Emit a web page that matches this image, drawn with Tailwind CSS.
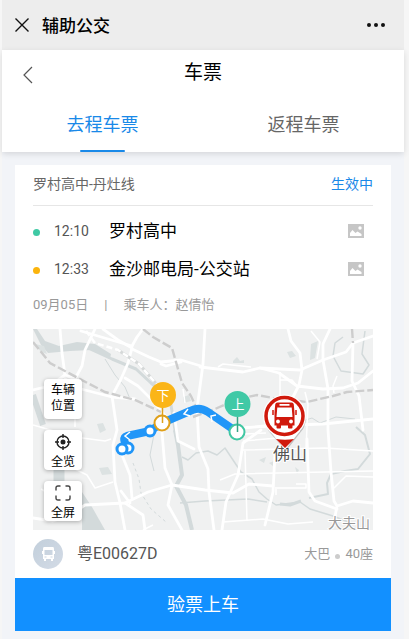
<!DOCTYPE html>
<html lang="zh-CN">
<head>
  <meta charset="UTF-8">
  <meta name="viewport" content="width=device-width, initial-scale=1">
  <title>车票</title>
  <script src="https://cdn.jsdelivr.net/npm/@tailwindcss/browser@4"></script>
</head>
<body class="bg-[#f6f6f6] font-[Roboto,'Noto_Sans_CJK_SC',sans-serif]">

  <div class="ml-0.5 mr-[5px] min-h-screen bg-[#f2f4f8]">

    <!-- app bar -->
    <header class="flex h-[50px] items-center bg-[#ededed] px-3">
      <button type="button" aria-label="关闭" class="h-4 w-4">
        <svg viewBox="0 0 16 16" class="h-4 w-4" fill="none" stroke="#111" stroke-width="1.4"><path d="M1.5 1.5l13 13M14.5 1.5l-13 13"/></svg>
      </button>
      <span class="ml-3 pt-0.5 text-[17px] leading-6 font-medium text-black">辅助公交</span>
      <button type="button" aria-label="更多" class="ml-auto mr-1.5">
        <svg viewBox="0 0 20 6" class="h-1.5 w-5" fill="#111"><circle cx="3" cy="3" r="2"/><circle cx="10" cy="3" r="2"/><circle cx="17" cy="3" r="2"/></svg>
      </button>
    </header>

    <div class="bg-white shadow-[0_2px_6px_rgba(0,0,0,0.12)]">
      <div class="grid h-12 grid-cols-[40px_1fr_40px] items-center">
        <button type="button" aria-label="返回" class="ml-5 pt-0.5">
          <svg viewBox="0 0 12 18" class="h-[18px] w-3" fill="none" stroke="#555" stroke-width="1.2"><path d="M10 1L2 9l8 8"/></svg>
        </button>
        <h1 class="pb-0.5 text-center text-[19px] leading-6 text-black">车票</h1>
      </div>
      <nav class="grid h-[54px] grid-cols-2 text-center text-[18px] leading-6">
        <a href="#go" class="flex flex-col items-center justify-between pt-[15px] text-[#1989e8]">
          去程车票
          <span class="h-0.5 w-[45px] rounded-full bg-[#1989e8]"></span>
        </a>
        <a href="#back" class="pt-[15px] text-[#666]">返程车票</a>
      </nav>
    </div>

    <main class="mx-[13px] mt-[13px] bg-white">
      <div class="px-[18px]">
        <div class="flex h-[41px] items-center justify-between border-b border-[#e6e6e6] pb-0.5 text-[14px] leading-5">
          <h2 class="text-[#666]">罗村高中-丹灶线</h2>
          <span class="text-[#1989e8]">生效中</span>
        </div>

        <ul class="pt-1.5">
          <li class="flex h-[38px] items-center">
            <span class="mt-0.5 h-[7px] w-[7px] rounded-full bg-[#3fc9a4]"></span>
            <span class="ml-3.5 w-[55px] text-[14px] text-[#555]">12:10</span>
            <span class="text-[17px] leading-6 text-black">罗村高中</span>
            <button type="button" aria-label="查看图片" class="ml-auto mr-[9px]">
              <svg viewBox="0 0 16 14" class="h-3.5 w-4"><path fill="#c6c6c6" d="M0 0h16v14H0z"/><path fill="#fff" d="M2 12V9l2.500-3 3 3 2-1.500 4 2.500v2z"/><circle cx="12" cy="4" r="1.700" fill="#fff"/></svg>
            </button>
          </li>
          <li class="flex h-[38px] items-center">
            <span class="mt-0.5 h-[7px] w-[7px] rounded-full bg-[#fbb40c]"></span>
            <span class="ml-3.5 w-[55px] text-[14px] text-[#555]">12:33</span>
            <span class="text-[17px] leading-6 text-black">金沙邮电局-公交站</span>
            <button type="button" aria-label="查看图片" class="ml-auto mr-[9px]">
              <svg viewBox="0 0 16 14" class="h-3.5 w-4"><path fill="#c6c6c6" d="M0 0h16v14H0z"/><path fill="#fff" d="M2 12V9l2.500-3 3 3 2-1.500 4 2.500v2z"/><circle cx="12" cy="4" r="1.700" fill="#fff"/></svg>
            </button>
          </li>
        </ul>

        <p class="flex h-[41px] pt-[7px] text-[13px] leading-5 text-[#999]">
          <span>09月05日</span><span class="mx-4">|</span><span>乘车人：赵倩怡</span>
        </p>

        <!-- map -->
        <div class="relative">
          <svg viewBox="0 0 340 201" class="block w-full bg-[#f0f1f1]" role="img" aria-label="线路地图">
            <!-- water -->
            <g fill="none" stroke="#d3dadb" stroke-linejoin="round">
              <path fill="#d3dadb" stroke="none" d="M0 0h4l8 12 14 5 18-4 18 2 16 10-1 5-18-9-22 1-22 2L8 16z"/>
              <path stroke-width="3" d="M55 19L79 30L103 40L118 54L137 70L142 101L145 116"/>
              <path stroke-width="4" d="M142 101L145 116L149 146L143 157L153 176L159 201"/>
              <path stroke-width="1.500" d="M149 128L155 131L163 124L175 122L184 126L192 119L208 143L219 150L226 163L234 170L243 176L267 173L277 180L300 187L318 194"/>
              <path stroke-width="1.500" d="M147 174L172 172L215 170L234 173"/>
              <path stroke-width="3" d="M247 175L257 176L268 172"/>
              <path stroke-width="1.500" d="M332 2L329 25L336 36L330 45L308 42L300 27L302 14L310 8"/>
              <path stroke-width="2" d="M323 98L332 106L337 125L325 140L312 142L298 145L294 154L295 165L276 169"/>
              <path stroke-width="1" d="M72 30L82 46L92 58L97 70M122 100L117 126L121 142M263 94L279 89L287 94L303 88L322 90"/>
              <path stroke-width="1" stroke-dasharray="3 3" d="M100 134L106 150L108 164L118 180L133 193M240 94L263 96"/>
              <path stroke-width="6" d="M0 66L6 84L10 96"/>
              <path stroke-width="11" d="M26 138v14"/>
            </g>
            <g fill="#dce2e2">
              <path fill="#d3dadb" d="M49 163l10 15 13 23H49z"/>
              <path d="M64 95l6-1 3 7-6 3zM66 139l9-1 4 7-10 1zM278 15l7-3-3 17-5 2zM200 32l4-4 3 4 4-1v3h-11zM226 131l7-3-2 6zM236 134l5-2-1 5zM262 138l4 3-2 4zM150 68l6-2 2 6-7 2zM254 23l5-1 4 5-6 2zM2 15l9 2 3 8-6-2z"/>
            </g>
            <!-- minor roads -->
            <g fill="none" stroke="#fff" stroke-width="1.500" stroke-linejoin="round">
              <path d="M42 50L42 98M0 96L42 108L72 112L78 110M42 140L54 146L62 159L80 153M8 160L40 178"/>
              <path d="M212 122L214 192M187 151L202 145L340 142M210 112L245 109M208 121L292 119L340 122M244 159L273 159L273 155L263 155M243 158L243 166"/>
              <path d="M247 43L247 68M247 51L259 51L264 57M272 63L275 75L273 120M304 47L300 57L301 64M278 2L287 13L284 30M213 98L233 98M210 105L233 104"/>
              <path d="M185 38L190 35L218 38M150 60L152 74M300 160L313 147L340 148"/>
              <path d="M110 201L120 196M190 193L230 190L255 195L280 193"/>
            </g>
            <!-- major roads -->
            <g fill="none" stroke="#fff" stroke-width="2.800" stroke-linejoin="round" stroke-linecap="round">
              <path d="M27 0L29 24L32 46L17 57L0 61M32 50L48 60L79 68L102 70"/>
              <path d="M62 0L52 21L49 37L42 50L32 46M48 2L75 10L99 17"/>
              <path d="M70 0L85 11L99 19L95 34L88 50L79 67L84 101L80 116L82 153L87 174L92 201"/>
              <path d="M99 17L104 8L110 0M99 20L116 28L128 33L148 31L168 37"/>
              <path d="M128 35L133 37L148 33M92 49L105 57L119 71L135 90L129 103L132 139L139 156L135 176L149 201"/>
              <path d="M0 189L20 192L36 187L52 176L92 174L115 163L139 156L172 161L200 164L216 155L240 157"/>
              <path d="M89 126L97 146L99 169M88 162L97 174M92 174L110 186L112 201"/>
              <path d="M172 0L170 35L164 80L166 118L175 140L176 163L181 201M141 84L145 112L161 120"/>
              <path d="M167 38L210 43L227 39L267 41L290 31L313 23L320 14L340 7"/>
              <path d="M227 39L246 44L264 57L290 60L310 59L325 54L340 42M255 0L258 12L267 24L269 41L266 56L260 68"/>
              <path d="M297 0L290 15L290 31L295 60L295 101L298 143L301 172L304 177L300 198M304 177L320 172L340 174"/>
              <path d="M320 14L319 52L326 67L330 101M210 99L232 97L290 95L340 90"/>
              <path d="M228 101L210 114L205 146L193 173L189 201M242 124L240 163L232 196M274 110L276 163L282 172L304 180"/>
            </g>
            <!-- rail -->
            <g fill="none" stroke="#cdcdcd" stroke-width="2.400" stroke-dasharray="9 3">
              <path d="M0 13L17 34L45 49L72 63L102 71L128 83M110 0L120 8L139 19L149 54L158 67L164 80"/>
              <path d="M160 88L182 80L205 70L224 66L240 69L274 73L300 67L314 63L340 61M319 0L320 14"/>
            </g>
            <path fill="none" stroke="#d6d9d9" stroke-width="3" d="M85 21L106 35L126 58"/>
            <path fill="none" stroke="#fff" stroke-width="2.500" stroke-dasharray="6 3" d="M53 2L62 14L85 21L106 35L126 58"/>
            <text x="240" y="131" font-size="17" fill="#555" stroke="#fff" stroke-width="2" paint-order="stroke">佛山</text>
            <text x="295" y="199" font-size="14" fill="#999" stroke="#fff" stroke-width="2" paint-order="stroke">大夫山</text>
            <!-- route -->
            <path fill="none" stroke="#2196f8" stroke-width="8" stroke-linejoin="round" d="M204 103L175 83Q166 77 157 82L129 94L117 102L94 107Q88 109 95 119"/>
            <g fill="none" stroke="#fff" stroke-width="1.500"><path d="M155 80l-4 5 6 2M183 86l-5 1 1 6M97 103l-5 4 5 4"/></g>
            <g fill="#fff" stroke="#2196f8" stroke-width="3"><circle cx="117" cy="102" r="5"/><circle cx="95" cy="119" r="5"/><circle cx="89" cy="120" r="5"/></g>
            <circle cx="129" cy="94" r="7.500" fill="#fff" stroke="#dfa01a" stroke-width="2"/>
            <path stroke="#dfa01a" stroke-width="1.500" d="M129.500 78v16"/>
            <circle cx="130" cy="66" r="13" fill="#fbb518"/>
            <text x="130" y="71" font-size="13" fill="#fff" text-anchor="middle">下</text>
            <circle cx="204" cy="103" r="7.500" fill="#fff" stroke="#40c7a3" stroke-width="2"/>
            <path stroke="#35a585" stroke-width="1.500" d="M204.500 88v15"/>
            <circle cx="204.500" cy="75" r="13" fill="#40c9a6"/>
            <text x="205" y="80" font-size="13" fill="#fff" text-anchor="middle">上</text>
            <!-- bus marker -->
            <path fill="#000" opacity=".2" d="M233 88a20 20 0 1 1 34 16l-14 18-14-16a20 20 0 0 1-6-18z"/>
            <path fill="#fff" d="M237 102h30l-15 19z"/>
            <circle cx="251.500" cy="87" r="21.500" fill="#fff"/>
            <circle cx="251.500" cy="87" r="18.500" fill="#fff" stroke="#d0190c" stroke-width="3.500"/>
            <path fill="#d0190c" d="M243 110q9 1.500 18 0l-9 9z"/>
            <path fill="#d0190c" fill-rule="evenodd" d="M244.500 73.500h14q2 0 2.300 2l.7 8v13h-2v2q0 1-1 1h-2.500q-1 0-1-1v-2h-7v2q0 1-1 1h-2.500q-1 0-1-1v-2h-2v-13l.7-8q.3-2 2.300-2zM246.500 75v1.800h10V75zM244.300 78.500l-.8 9.500h16l-.8-9.500z"/>
            <g fill="#fff"><circle cx="245" cy="92.500" r="1.900"/><circle cx="258" cy="92.500" r="1.900"/></g>
            <path stroke="#d0190c" stroke-width="1.500" d="M240 81v5M263 81v5"/>
          </svg>

          <div class="absolute top-[50px] left-[11px] flex flex-col gap-[11px] text-[12px] leading-4 text-black">
            <button type="button" class="h-10 w-[38px] rounded bg-white pb-0.5 shadow-[0_1px_4px_rgba(0,0,0,0.3)]"><span class="block">车辆</span><span class="block">位置</span></button>
            <button type="button" class="flex h-10 w-[38px] flex-col items-center justify-between rounded bg-white pt-1 shadow-[0_1px_4px_rgba(0,0,0,0.3)]">
              <svg viewBox="0 0 16 16" class="h-4 w-4" fill="none" stroke="#222" stroke-width="1.400"><circle cx="8" cy="8" r="6"/><path d="M8 0v4M8 12v4M0 8h4M12 8h4"/><circle cx="8" cy="8" r="1.800" fill="#222"/></svg>
              全览
            </button>
            <button type="button" class="flex h-10 w-[38px] flex-col items-center justify-between rounded bg-white pt-1 shadow-[0_1px_4px_rgba(0,0,0,0.3)]">
              <svg viewBox="0 0 16 16" class="h-4 w-4" fill="none" stroke="#444" stroke-width="1.400"><path d="M1 5.500V3q0-2 2-2h2.500M10.500 1H13q2 0 2 2v2.500M15 10.500V13q0 2-2 2h-2.500M5.500 15H3q-2 0-2-2v-2.500"/></svg>
              全屏
            </button>
          </div>
        </div>

        <div class="flex h-12 items-center">
          <svg viewBox="0 0 30 30" class="h-[30px] w-[30px]">
            <defs><linearGradient id="avatar" x1="0" y1="0" x2="1" y2="1"><stop offset="0" stop-color="#c2cfdb"/><stop offset="1" stop-color="#d3dbe6"/></linearGradient></defs>
            <circle cx="15" cy="15" r="15" fill="url(#avatar)"/>
            <path fill="#fff" fill-rule="evenodd" d="M11 8h9q1 0 1 2v10h-1v2h-2v-2h-5v2h-2v-2h-1V10q0-2 1-2zM11.500 11v5h8v-5zM11.500 17.500v1h2v-1zM17.500 17.500v1h2v-1zM9 12h1v3H9zM21 12h1v3h-1z"/>
          </svg>
          <span class="ml-3.5 text-[16px] text-[#555]">粤E00627D</span>
          <span class="ml-auto flex items-center text-[13px] text-[#999]">大巴<i class="mx-[5px] mt-1 h-[5px] w-[5px] rounded-full bg-[#ccc]"></i>40座</span>
        </div>
      </div>

      <button type="button" class="block h-[53px] w-full bg-[#1290ff] text-[18px] text-white">验票上车</button>
    </main>
  </div>

</body>
</html>
